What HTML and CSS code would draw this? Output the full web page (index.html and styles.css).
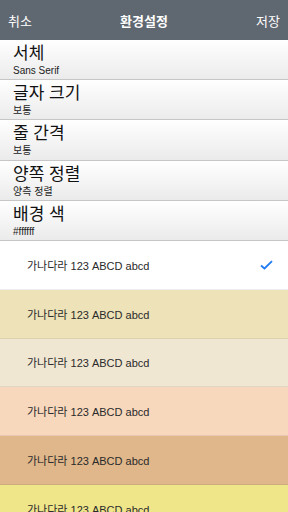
FILE: index.html
```html
<!doctype html>
<html>
  <head>
    <meta charset="UTF-8">
    <title>환경설정</title>
    <link rel="stylesheet" href="styles.css">
  </head>
  <body>
    <div class="topbar">
      <span class="btn">취소</span>
      <span class="title">환경설정</span>
      <span class="btn">저장</span>
    </div>

    <ul class="settings">
      <li><div class="name">서체</div><div class="value latin">Sans Serif</div></li>
      <li><div class="name">글자 크기</div><div class="value">보통</div></li>
      <li><div class="name">줄 간격</div><div class="value">보통</div></li>
      <li><div class="name">양쪽 정렬</div><div class="value">양측 정렬</div></li>
      <li><div class="name">배경 색</div><div class="value latin">#ffffff</div></li>
    </ul>

    <ul class="colors">
      <li class="c1">가나다라 123 ABCD abcd
        <svg class="check" width="13" height="10" viewBox="0 0 13 10"><path d="M1 5.5 L4.5 8.5 L12 1.2" fill="none" stroke="#1f7cf4" stroke-width="1.8"/></svg>
      </li>
      <li class="c2">가나다라 123 ABCD abcd</li>
      <li class="c3">가나다라 123 ABCD abcd</li>
      <li class="c4">가나다라 123 ABCD abcd</li>
      <li class="c5">가나다라 123 ABCD abcd</li>
      <li class="c6">가나다라 123 ABCD abcd</li>
    </ul>
  </body>
</html>
```

FILE: styles.css
```css
*{
  margin:0;
  padding:0;
  box-sizing:border-box;
}
body{
  width:288px;
  height:512px;
  overflow:hidden;
  font-family:"Liberation Sans","Noto Sans CJK KR",sans-serif;
  background:#fff;
}
ul{
  list-style:none;
}

.topbar{
  height:40px;
  background-color:#5f6771;
  display:flex;
  align-items:center;
  justify-content:space-between;
  padding:0 8px 0 8px;
  color:#fff;
  font-size:13px;
}
.topbar .title{
  font-weight:bold;
}

.settings li{
  height:40.2px;
  padding:4px 13px 0;
  background:linear-gradient(#ffffff,#ebebeb);
  border-bottom:1px solid #c6c6c6;
}
.settings .name{
  font-size:17px;
  line-height:20px;
  color:#111;
}
.settings .value{
  font-size:10px;
  line-height:13px;
  color:#222;
}

.colors li{
  height:48.8px;
  display:flex;
  align-items:center;
  padding:0 15px 0 27px;
  font-size:11px;
  color:#2a2a2a;
  border-bottom:1px solid rgba(0,0,0,0.07);
}
.colors .check{
  margin-left:auto;
}
.c1{ background:#ffffff; }
.c2{ background:#ede2b8; }
.c3{ background:#f0e7d3; }
.c4{ background:#f7d8bd; }
.c5{ background:#dfb78a; }
.c6{ background:#efe68a; }
```
